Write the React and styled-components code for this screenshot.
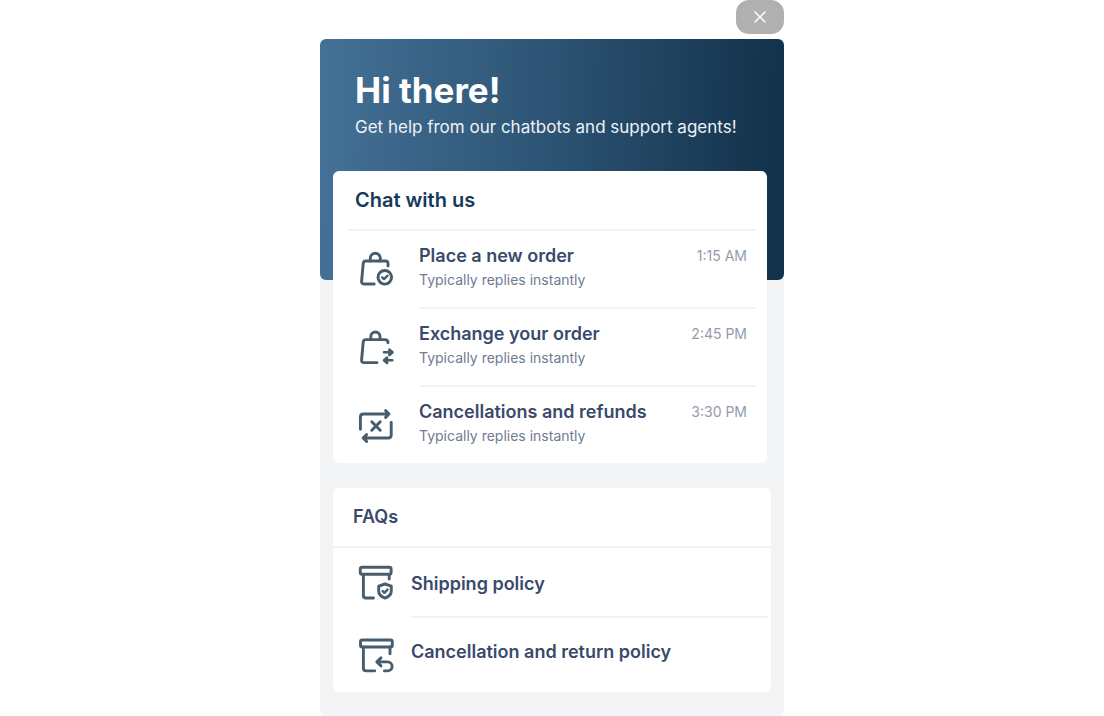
import React from "react";
import styled, { createGlobalStyle } from "styled-components";

const GlobalStyle = createGlobalStyle`
  :root {
    --navy: #16395a;
    --slate: #3a4a6b;
    --muted: #6f7b91;
    --faint: #929bad;
    --line: #f2f3f5;
    --surface: #f3f4f6;
    --icon: #475c6c;
  }

  * {
    box-sizing: border-box;
  }

  body {
    margin: 0;
    background: #fff;
    font-family: Inter, "Liberation Sans", sans-serif;
  }

  button {
    font-family: inherit;
    border: none;
    cursor: pointer;
  }
`;

const Widget = styled.div`
  display: flex;
  flex-direction: column;
  gap: 5px;
  width: 100%;
  max-width: 464px;
  margin: 0 auto;
`;

const CloseButton = styled.button`
  display: flex;
  align-items: center;
  justify-content: center;
  align-self: flex-end;
  width: 48px;
  height: 34px;
  padding: 0;
  border-radius: 13px;
  background: #b0b0b0;
  color: #fff;
`;

const Panel = styled.main`
  padding-bottom: 24px;
  border-radius: 6px;
  background: var(--surface);
`;

const Header = styled.header`
  padding: 30px 35px 138px;
  border-radius: 6px;
  background: linear-gradient(92deg, #447196 0%, #2c5373 50%, #13324b 97%);
  color: #fff;

  & > h1 {
    margin: 0;
    font-size: 35px;
    font-weight: 700;
    line-height: 43px;
  }

  & > p {
    margin: 0;
    color: #eef2f6;
    font-size: 17px;
    line-height: 30px;
  }
`;

const Card = styled.section`
  overflow: hidden;
  border-radius: 6px;
  background: #fff;
`;

// Pulled up so it overlaps the lower part of the header
const ChatCard = styled(Card)`
  margin: -109px 17px 0 13px;
  padding: 0 12px 0 16px;
`;

const FaqCard = styled(Card)`
  margin: 25px 13px 0;
`;

const CardTitle = styled.h2`
  margin: 0;
  padding: 0 ${({ $inset }) => $inset};
  border-bottom: 2px solid var(--line);
  color: ${({ $color }) => $color};
  font-size: ${({ $size }) => $size};
  font-weight: 600;
  line-height: 58px;
`;

const List = styled.ul`
  margin: 0;
  padding: 0;
  list-style: none;
`;

const RowButton = styled.button`
  display: flex;
  align-items: center;
  width: 100%;
  background: none;
  text-align: left;
`;

const ChatRow = styled(RowButton)`
  gap: 23px;
  padding: 0 0 0 7px;
`;

const ChatBody = styled.span`
  display: flex;
  flex: 1;
  justify-content: space-between;
  padding: 13px 8px 16px 0;
`;

// The divider starts where the text does, right of the icon
const ChatItem = styled.li`
  & + & {
    padding-top: 2px;
    background: linear-gradient(var(--line), var(--line)) 70px 0 / 100% 2px
      no-repeat;
  }
`;

const ChatText = styled.span`
  display: flex;
  flex-direction: column;
`;

const RowTitle = styled.span`
  color: var(--slate);
  font-size: 18px;
  font-weight: 600;
  line-height: 24px;
`;

const Reply = styled.span`
  color: var(--muted);
  font-size: 14px;
  line-height: 23px;
`;

const Time = styled.time`
  color: var(--faint);
  font-size: 14px;
  line-height: 24px;
`;

const FaqRow = styled(RowButton)`
  gap: 15px;
  padding: 0 3px 0 23px;
`;

const FaqBody = styled.span`
  display: flex;
  flex: 1;
  padding: 24px 0 20px;
  border-bottom: 2px solid var(--line);

  li:last-child & {
    padding: 22px 0 28px;
    border-bottom: none;
  }
`;

const IconSvg = styled.svg`
  flex: none;
  width: 40px;
  height: 40px;
  fill: none;
  stroke: var(--icon);
  stroke-width: 2.9;
  stroke-linecap: round;
  stroke-linejoin: round;
`;

const Icon = ({ children }) => (
  <IconSvg viewBox="0 0 40 40" aria-hidden="true">
    {children}
  </IconSvg>
);

const BagCheckIcon = () => (
  <Icon>
    <path d="M14.3 12V9.3a5 5 0 0 1 10 0V12" />
    <path d="M32 17v-2.5Q32 12 29.5 12H10q-2.6 0-2.8 2.6L5.6 32.4Q5.4 35 8 35h10.2" />
    <circle cx="28.8" cy="28.3" r="6.8" />
    <path d="m26.2 28.4 1.8 1.7 3.6-3.4" strokeWidth="2.4" />
  </Icon>
);

const BagExchangeIcon = () => (
  <Icon>
    <path d="M14.8 12.6V9.6a4.6 4.6 0 0 1 9.2 0v3" />
    <path d="M32 15.8q0-3.2-3-3.2H10q-2.6 0-2.8 2.6L5.6 33q-.2 2.6 2.4 2.6h13" />
    <path d="M28 25.3h7.4M33.5 22.6l3 2.7-3 2.7z" strokeWidth="2.6" />
    <path d="M36.4 33.3H29M31 30.6l-3 2.7 3 2.7z" strokeWidth="2.6" />
  </Icon>
);

const RefundIcon = () => (
  <Icon>
    <path d="M4.4 24.2V12q0-3 3-3H32M29.6 5.6 33 9l-3.4 3.4" />
    <path d="M35.2 17.4V30q0 3-3 3H8M10.6 29.6 7.2 33l3.4 3.4" />
    <path d="m15.8 16.8 8.4 8.4M24.2 16.8l-8.4 8.4" strokeWidth="3" />
  </Icon>
);

const BoxShieldIcon = () => (
  <Icon>
    <rect x="4.3" y="4.3" width="30.8" height="7" rx="1.8" />
    <path d="M7.4 11.5v21Q7.4 35 9.9 35h7.6M33.2 11.5V16" />
    <path d="m29 21 6.3 2.1v5q0 4.9-6.3 7-6.3-2.1-6.3-7v-5z" />
    <path d="m26.6 28 1.8 1.8 3.2-3.2" strokeWidth="2.4" />
  </Icon>
);

const BoxReturnIcon = () => (
  <Icon>
    <rect x="4.5" y="5" width="31.8" height="7" rx="1.8" />
    <path d="M7.4 12v21q0 2.9 2.9 2.9h8.4M34 12v6.8" />
    <path d="M21.2 26.9h10.4a4.5 4.5 0 0 1 0 9h-3.2M25 22.9l-4.2 4 4.2 4" />
  </Icon>
);

const chats = [
  { title: "Place a new order", time: "1:15 AM", icon: BagCheckIcon },
  { title: "Exchange your order", time: "2:45 PM", icon: BagExchangeIcon },
  { title: "Cancellations and refunds", time: "3:30 PM", icon: RefundIcon },
];

const faqs = [
  { title: "Shipping policy", icon: BoxShieldIcon },
  { title: "Cancellation and return policy", icon: BoxReturnIcon },
];

const App = () => {
  return (
    <>
      <GlobalStyle />
      <Widget>
        <CloseButton type="button" aria-label="Close">
          <svg width="12" height="12" viewBox="0 0 12 12" aria-hidden="true">
            <path
              d="M1 1l10 10M11 1L1 11"
              stroke="currentColor"
              strokeWidth="1.5"
              strokeLinecap="round"
            />
          </svg>
        </CloseButton>
        <Panel>
          <Header>
            <h1>Hi there!</h1>
            <p>Get help from our chatbots and support agents!</p>
          </Header>
          <ChatCard>
            <CardTitle $inset="6px" $size="20px" $color="var(--navy)">
              Chat with us
            </CardTitle>
            <List>
              {chats.map(({ title, time, icon: ChatIcon }) => (
                <ChatItem key={title}>
                  <ChatRow type="button">
                    <ChatIcon />
                    <ChatBody>
                      <ChatText>
                        <RowTitle>{title}</RowTitle>
                        <Reply>Typically replies instantly</Reply>
                      </ChatText>
                      <Time>{time}</Time>
                    </ChatBody>
                  </ChatRow>
                </ChatItem>
              ))}
            </List>
          </ChatCard>
          <FaqCard>
            <CardTitle $inset="20px" $size="18px" $color="var(--slate)">
              FAQs
            </CardTitle>
            <List>
              {faqs.map(({ title, icon: FaqIcon }) => (
                <li key={title}>
                  <FaqRow type="button">
                    <FaqIcon />
                    <FaqBody>
                      <RowTitle>{title}</RowTitle>
                    </FaqBody>
                  </FaqRow>
                </li>
              ))}
            </List>
          </FaqCard>
        </Panel>
      </Widget>
    </>
  );
};

export default App;
